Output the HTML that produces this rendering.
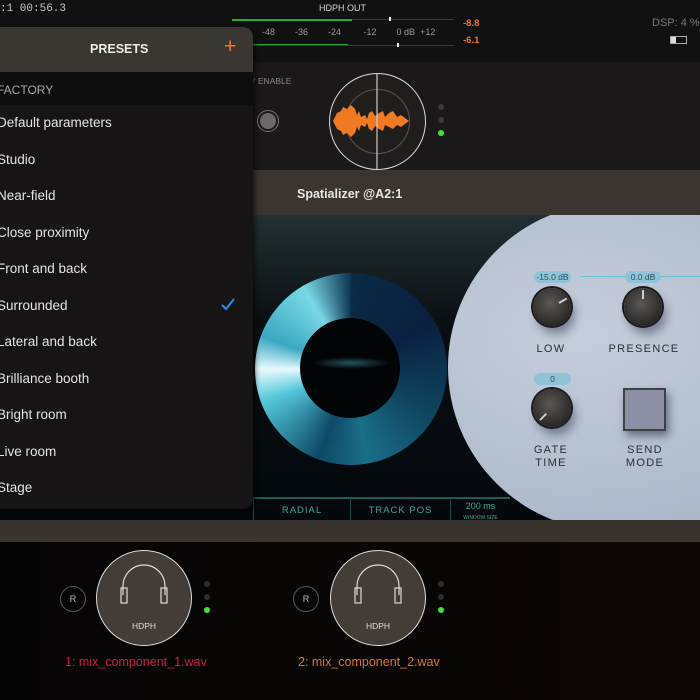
<!DOCTYPE html>
<html><head><meta charset="utf-8"><style>
*{margin:0;padding:0;box-sizing:border-box}
body{width:700px;height:700px;overflow:hidden;background:#0d0b0b;font-family:"Liberation Sans",sans-serif;position:relative}
.a{position:absolute}
.t{position:absolute;white-space:nowrap}
.item{position:absolute;left:-3px;color:#e6e3e0;font-size:13.5px}
.lbl{position:absolute;color:#2a2e36;font-size:11px;letter-spacing:1.3px;text-align:center;width:90px}
.knob{position:absolute;width:38px;height:38px;border-radius:50%;background:radial-gradient(circle at 45% 40%,#5c5856,#2b2826 70%);box-shadow:4px 8px 10px rgba(20,30,50,.45),0 0 0 2px #1c1a19}
.knob i{position:absolute;left:18px;top:2px;width:2px;height:9px;background:#ccc;transform-origin:1px 17px}
.pill{position:absolute;height:12px;border-radius:6px;background:#8fc3d6;color:#2f4f60;font-size:8.5px;text-align:center;line-height:12px}
.tab{position:absolute;top:497px;height:23px;color:#3fa896;font-size:9.5px;letter-spacing:1px;text-align:center;line-height:23px;border-left:1px solid #1f4a4a;border-top:2px solid #1e5a52}
</style></head><body>
<div class="a" style="left:0;top:0;width:700px;height:62px;background:#121112"></div>
<div class="t" style="left:0;top:3px;color:#c9c6c3;font-family:'Liberation Mono',monospace;font-size:11px">:1  00:56.3</div>
<div class="t" style="left:319px;top:3px;color:#d6d3d0;font-size:9px">HDPH OUT</div>
<div class="a" style="left:232px;top:19px;width:222px;height:1px;background:#3a3a3a"></div>
<div class="a" style="left:232px;top:19px;width:120px;height:2px;background:#2aa83a"></div>
<div class="a" style="left:232px;top:44px;width:116px;height:2px;background:#2aa83a"></div>
<div class="a" style="left:232px;top:45px;width:222px;height:1px;background:#3a3a3a"></div>
<div class="a" style="left:389px;top:17px;width:2px;height:4px;background:#eee"></div>
<div class="a" style="left:397px;top:43px;width:2px;height:4px;background:#eee"></div>
<div class="t" style="left:262px;top:27px;color:#9c9a98;font-size:9px">-48&nbsp;&nbsp;&nbsp;&nbsp;&nbsp;&nbsp;&nbsp;&nbsp;-36&nbsp;&nbsp;&nbsp;&nbsp;&nbsp;&nbsp;&nbsp;&nbsp;-24&nbsp;&nbsp;&nbsp;&nbsp;&nbsp;&nbsp;&nbsp;&nbsp;&nbsp;-12&nbsp;&nbsp;&nbsp;&nbsp;&nbsp;&nbsp;&nbsp;&nbsp;0 dB&nbsp;&nbsp;+12</div>
<div class="t" style="left:463px;top:18px;color:#e8782a;font-size:9.5px;font-weight:bold">-8.8</div>
<div class="t" style="left:463px;top:35px;color:#e8782a;font-size:9.5px;font-weight:bold">-6.1</div>
<div class="t" style="left:652px;top:17px;color:#7a7876;font-size:11px">DSP:  4 %</div>
<div class="a" style="left:670px;top:36px;width:17px;height:8px;border:1px solid #aaa"><div style="width:5px;height:100%;background:#ddd"></div></div>
<div class="a" style="left:0;top:62px;width:700px;height:108px;background:#1a1818"></div>
<div class="t" style="left:250px;top:76px;color:#8a8785;font-size:8.5px">Y ENABLE</div>
<div class="a" style="left:257px;top:110px;width:22px;height:22px;border-radius:50%;border:1px solid #777;background:#1a1818"><div style="margin:2px;width:16px;height:16px;border-radius:50%;background:#6a6968"></div></div>
<div class="a" style="left:329px;top:73px;width:97px;height:97px;border-radius:50%;border:1.5px solid #ddd;background:#201e1d"></div>
<div class="a" style="left:345px;top:89px;width:65px;height:65px;border-radius:50%;border:1px solid #555"></div>
<svg class="a" style="left:329px;top:73px" width="97" height="97"><path d="M4 48 L8 40 L12 38 L14 34 L18 36 L22 32 L26 36 L28 42 L30 38 L32 44 L36 42 L38 46 L40 40 L43 38 L46 43 L50 40 L54 38 L56 44 L60 40 L64 38 L68 44 L72 42 L76 45 L80 48 L76 51 L72 54 L68 52 L64 56 L60 54 L56 52 L54 58 L50 56 L46 53 L43 58 L40 56 L38 50 L36 54 L32 52 L30 58 L28 54 L26 60 L22 64 L18 60 L14 62 L12 58 L8 56 Z" fill="#f07a22"/><line x1="48" y1="0" x2="48" y2="97" stroke="#ccc" stroke-width="1.2"/></svg>
<div class="a" style="left:438px;top:104px;width:6px;height:6px;border-radius:50%;background:#3a3a3a"></div>
<div class="a" style="left:438px;top:117px;width:6px;height:6px;border-radius:50%;background:#3a3a3a"></div>
<div class="a" style="left:438px;top:130px;width:6px;height:6px;border-radius:50%;background:#3ee23a"></div>
<div class="a" style="left:0;top:170px;width:700px;height:45px;background:#3a3530"></div>
<div class="t" style="left:297px;top:187px;color:#e8e6e3;font-size:12.5px;font-weight:bold">Spatializer @A2:1</div>
<div class="a" style="left:0;top:215px;width:700px;height:305px;overflow:hidden;background:linear-gradient(180deg,#233033 0%,#0a0f12 35%,#04080c 100%)">
 <div class="a" style="left:255px;top:58px;width:192px;height:192px;border-radius:50%;background:conic-gradient(from 0deg,#0a2a45,#0a2040 60deg,#0f4560 120deg,#1a6e88 170deg,#0d4a66 200deg,#55c8da 250deg,#e8fafd 270deg,#3aa8c2 290deg,#7ad8e6 330deg,#0c3352 360deg)"></div>
 <div class="a" style="left:300px;top:103px;width:100px;height:100px;border-radius:50%;background:#020406"></div>
 <div class="a" style="left:312px;top:142px;width:78px;height:12px;background:radial-gradient(ellipse,#3a8a9a 0%,rgba(0,0,0,0) 70%);opacity:.6"></div>
 <div class="a" style="left:448px;top:-12px;width:420px;height:328px;border-radius:164px;background:radial-gradient(ellipse at 30% 40%,#c5cedc,#aab6c8 80%)"></div>
 <div class="a" style="left:580px;top:61px;width:120px;height:1px;background:#6ec0d0"></div>
 <div class="pill" style="left:534px;top:56px;width:37px">-15.0 dB</div>
 <div class="pill" style="left:625px;top:56px;width:36px">0.0 dB</div>
 <div class="knob" style="left:533px;top:73px"><i style="transform:rotate(60deg)"></i></div>
 <div class="knob" style="left:624px;top:73px"><i></i></div>
 <div class="knob" style="left:533px;top:174px"><i style="transform:rotate(-135deg)"></i></div>
 <div class="pill" style="left:534px;top:158px;width:37px">0</div>
 <div class="lbl" style="left:506px;top:128px">LOW</div>
 <div class="lbl" style="left:599px;top:128px">PRESENCE</div>
 <div class="lbl" style="left:506px;top:229px;line-height:13px">GATE<br>TIME</div>
 <div class="lbl" style="left:600px;top:229px;line-height:13px">SEND<br>MODE</div>
 <div class="a" style="left:623px;top:173px;width:43px;height:43px;background:#8d90a4;border:2px solid #3e4048;box-shadow:3px 5px 8px rgba(20,30,50,.5)"></div>
</div>
<div class="tab" style="left:253px;width:97px">RADIAL</div>
<div class="tab" style="left:350px;width:100px">TRACK POS</div>
<div class="tab" style="left:450px;width:60px;line-height:10px;padding-top:2px;font-size:9px;letter-spacing:0">200 ms<br><span style="font-size:5px">WINDOW SIZE</span></div>
<div class="a" style="left:0;top:520px;width:700px;height:22px;background:#3a342e"></div>
<div class="a" style="left:0;top:542px;width:700px;height:158px;background:linear-gradient(90deg,#050404,#0d0606)"></div>
<div class="a" style="left:96px;top:550px;width:96px;height:96px;border-radius:50%;background:#443c36;border:1.5px solid #ddd"></div>
<div class="a" style="left:330px;top:550px;width:96px;height:96px;border-radius:50%;background:#443c36;border:1.5px solid #ddd"></div>
<svg class="a" style="left:96px;top:550px" width="96" height="96"><path d="M27 45 V36 A21 21 0 0 1 69 36 V45" fill="none" stroke="#ddd" stroke-width="1.2"/><rect x="25" y="38" width="6" height="15" fill="none" stroke="#ddd" stroke-width="1.2"/><rect x="65" y="38" width="6" height="15" fill="none" stroke="#ddd" stroke-width="1.2"/><text x="48" y="79" fill="#ddd" font-size="8.5" text-anchor="middle" font-family="Liberation Sans">HDPH</text></svg>
<svg class="a" style="left:330px;top:550px" width="96" height="96"><path d="M27 45 V36 A21 21 0 0 1 69 36 V45" fill="none" stroke="#ddd" stroke-width="1.2"/><rect x="25" y="38" width="6" height="15" fill="none" stroke="#ddd" stroke-width="1.2"/><rect x="65" y="38" width="6" height="15" fill="none" stroke="#ddd" stroke-width="1.2"/><text x="48" y="79" fill="#ddd" font-size="8.5" text-anchor="middle" font-family="Liberation Sans">HDPH</text></svg>
<div class="a" style="left:60px;top:586px;width:26px;height:26px;border-radius:50%;border:1px solid #555;color:#bbb;font-size:9px;text-align:center;line-height:24px">R</div>
<div class="a" style="left:293px;top:586px;width:26px;height:26px;border-radius:50%;border:1px solid #555;color:#bbb;font-size:9px;text-align:center;line-height:24px">R</div>
<div class="a" style="left:204px;top:581px;width:6px;height:6px;border-radius:50%;background:#2e2e2e"></div>
<div class="a" style="left:204px;top:594px;width:6px;height:6px;border-radius:50%;background:#2e2e2e"></div>
<div class="a" style="left:204px;top:607px;width:6px;height:6px;border-radius:50%;background:#3ee23a"></div>
<div class="a" style="left:438px;top:581px;width:6px;height:6px;border-radius:50%;background:#2e2e2e"></div>
<div class="a" style="left:438px;top:594px;width:6px;height:6px;border-radius:50%;background:#2e2e2e"></div>
<div class="a" style="left:438px;top:607px;width:6px;height:6px;border-radius:50%;background:#3ee23a"></div>
<div class="t" style="left:65px;top:655px;color:#c8203e;font-size:12.5px">1: mix_component_1.wav</div>
<div class="t" style="left:298px;top:655px;color:#d07a30;font-size:12.5px">2: mix_component_2.wav</div>
<div class="a" style="left:-10px;top:27px;width:263px;height:482px;border-radius:0 10px 10px 0;overflow:hidden;background:#161415;box-shadow:2px 2px 6px rgba(0,0,0,.6)">
 <div class="a" style="left:0;top:0;width:263px;height:45px;background:#3a3631"></div>
 <div class="t" style="left:100px;top:15px;color:#eceae7;font-size:12.5px;font-weight:bold">PRESETS</div>
 <div class="t" style="left:234px;top:8px;color:#f07a22;font-size:21px;line-height:24px">+</div>
 <div class="a" style="left:0;top:45px;width:263px;height:33px;background:#0e0d0d"></div>
 <div class="t" style="left:7px;top:56px;color:#aaa7a4;font-size:12px">FACTORY</div>
</div>
<div class="item" style="top:115px">Default parameters</div>
<div class="item" style="top:152px">Studio</div>
<div class="item" style="top:188px">Near-field</div>
<div class="item" style="top:225px">Close proximity</div>
<div class="item" style="top:261px">Front and back</div>
<div class="item" style="top:298px">Surrounded</div>
<div class="item" style="top:334px">Lateral and back</div>
<div class="item" style="top:371px">Brilliance booth</div>
<div class="item" style="top:407px">Bright room</div>
<div class="item" style="top:444px">Live room</div>
<div class="item" style="top:480px">Stage</div>
<svg class="a" style="left:220px;top:297px" width="16" height="16"><path d="M2 8 L6 12 L14 2" fill="none" stroke="#2a8cf0" stroke-width="2"/></svg>
</body></html>
